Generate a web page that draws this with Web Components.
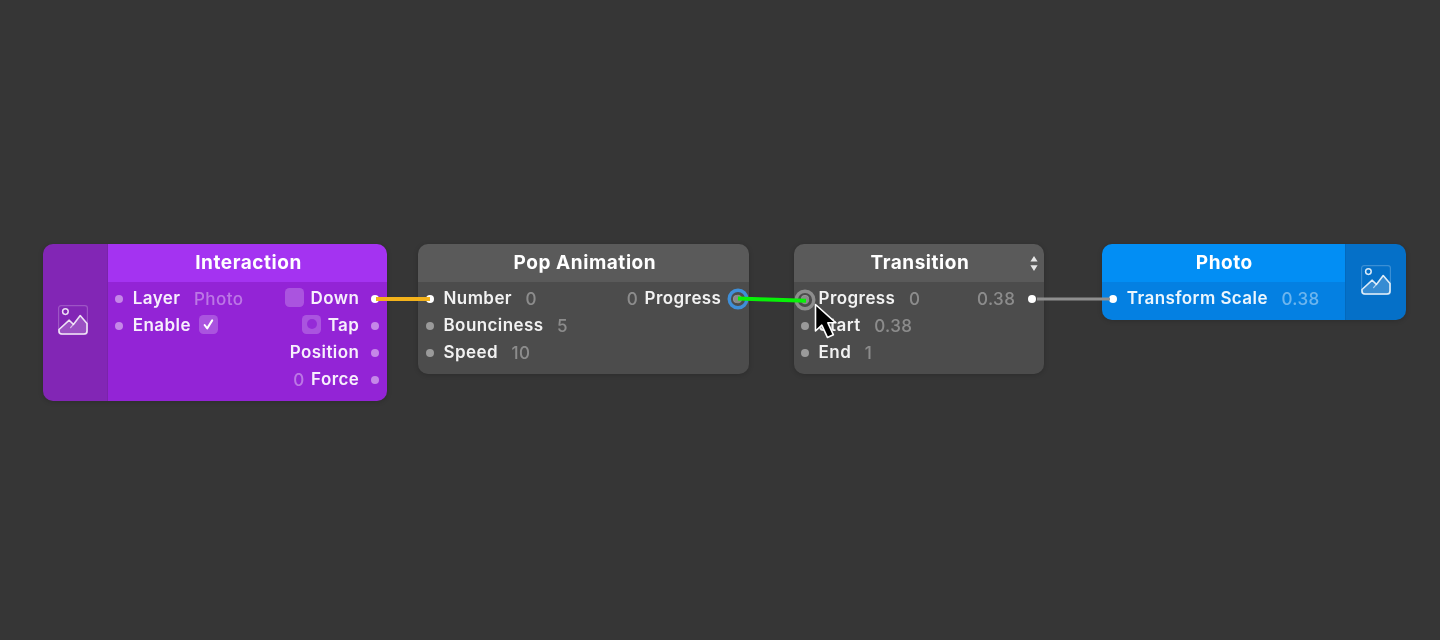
<!DOCTYPE html>
<html lang="en"><head><meta charset="utf-8"><title>Patch editor</title>
<style>html,body{margin:0;background:#363636}</style></head>
<body>
<patch-canvas>
  <patch-node title="Interaction" theme="purple" side="left" style="left:42.7px;top:243.7px;width:344.6px">
    <patch-row>
      <patch-port slot="left" dir="in" label="Layer" value="Photo"></patch-port>
      <patch-port slot="right" dir="out" label="Down" state="on"><toggle-box kind="plain"></toggle-box></patch-port>
    </patch-row>
    <patch-row>
      <patch-port slot="left" dir="in" label="Enable"><toggle-box kind="check"></toggle-box></patch-port>
      <patch-port slot="right" dir="out" label="Tap"><toggle-box kind="dot"></toggle-box></patch-port>
    </patch-row>
    <patch-row><patch-port slot="right" dir="out" label="Position"></patch-port></patch-row>
    <patch-row><patch-port slot="right" dir="out" label="Force" value="0"></patch-port></patch-row>
  </patch-node>
  <patch-node title="Pop Animation" theme="gray" style="left:418.4px;top:243.7px;width:331px">
    <patch-row>
      <patch-port slot="left" dir="in" label="Number" value="0" state="on"></patch-port>
      <patch-port slot="right" dir="out" label="Progress" value="0"></patch-port>
    </patch-row>
    <patch-row><patch-port slot="left" dir="in" label="Bounciness" value="5"></patch-port></patch-row>
    <patch-row><patch-port slot="left" dir="in" label="Speed" value="10"></patch-port></patch-row>
  </patch-node>
  <patch-node title="Transition" theme="gray" sort style="left:793.5px;top:243.7px;width:250.8px">
    <patch-row>
      <patch-port slot="left" dir="in" label="Progress" value="0"></patch-port>
      <patch-port slot="right" dir="out" value="0.38" state="on"></patch-port>
    </patch-row>
    <patch-row><patch-port slot="left" dir="in" label="Start" value="0.38"></patch-port></patch-row>
    <patch-row><patch-port slot="left" dir="in" label="End" value="1"></patch-port></patch-row>
  </patch-node>
  <patch-node title="Photo" theme="blue" side="right" style="left:1101.7px;top:243.7px;width:304.3px">
    <patch-row><patch-port slot="left" dir="in" label="Transform Scale" value="0.38" state="on"></patch-port></patch-row>
  </patch-node>
  <patch-wires></patch-wires>
</patch-canvas>
<script>
function define(name, css, html){
  customElements.define(name, class extends HTMLElement{
    connectedCallback(){
      if(this.shadowRoot) return;
      const r=this.attachShadow({mode:'open'});
      r.innerHTML='<style>'+css+'</style>'+(typeof html==='function'?html(this):html);
    }
  });
}
const attr=(el,n)=>el.getAttribute(n)||'';
const picture=`<svg viewBox="0 0 30 30" width="30" height="30" fill="none" stroke-linejoin="round" stroke-linecap="round">
<rect x=".6" y=".6" width="28.8" height="28.8" rx="2.5" stroke="#fff" stroke-opacity=".22" stroke-width="1.2"/>
<circle cx="7.4" cy="6.6" r="2.8" stroke="#fff" stroke-opacity=".85" stroke-width="1.5"/>
<path d="M1 24.5 11.2 15.2 15.4 19.4 22.2 10.6 29 18.6V26a3 3 0 0 1-3 3H4a3 3 0 0 1-3-3Z" fill="#fff" fill-opacity=".2" stroke="#fff" stroke-opacity=".85" stroke-width="1.6"/>
<path d="M15.4 19.4 12.6 22.6" stroke="#fff" stroke-opacity=".6" stroke-width="1.3"/></svg>`;

define('patch-canvas',
 `:host{display:block;position:relative;width:1440px;height:640px;overflow:hidden;background:#363636;
   font-family:Inter,"Noto Sans",sans-serif;color:#fff;filter:blur(.45px)}`,
 '<slot></slot>');

define('patch-node',
 `:host{position:absolute;display:flex;border-radius:10px;overflow:hidden;box-shadow:0 1px 5px rgba(0,0,0,.18);
   --head:#5a5a5a;--body:#4c4c4c;--side:#4c4c4c;--dot:#9a9a9a;--val:rgba(255,255,255,.36)}
 :host([theme=purple]){--head:#a433f1;--body:#9324d6;--side:#8226b5;--dot:#c587e8;--val:rgba(255,255,255,.38)}
 :host([theme=blue]){--head:#028ef4;--body:#0480e2;--side:#0570c8;--dot:#fff;--val:rgba(255,255,255,.42)}
 .main{flex:1;min-width:0;display:flex;flex-direction:column}
 header{height:38px;flex:none;background:var(--head);display:flex;align-items:center;justify-content:center;
   position:relative;font-size:19px;font-weight:700;letter-spacing:.55px;padding:0 0 1px 2px;box-sizing:border-box}
 .rows{flex:1;background:var(--body);padding:3.6px 8px 7.4px 7.6px}
 aside{flex:none;display:flex;align-items:center;justify-content:center;background:var(--side);box-sizing:border-box;padding-bottom:4px}
 aside.left{width:65px;border-right:1px solid rgba(0,0,0,.06);padding-right:4px}
 aside.right{width:61px;border-left:1px solid rgba(0,0,0,.06)}
 .sort{position:absolute;right:6.5px;top:12px;display:block}`,
 el=>{
  const s=attr(el,'side');
  const a=s?`<aside class="${s}">${picture}</aside>`:'';
  const sort=el.hasAttribute('sort')?`<svg class="sort" width="8" height="15" viewBox="0 0 8 15"><path d="M4 0 7.6 5.4H.4ZM4 15 .4 9.2H7.6Z" fill="#e6e6e6"/></svg>`:'';
  const m=`<div class="main"><header>${attr(el,'title')}${sort}</header><div class="rows"><slot></slot></div></div>`;
  return s==='left'?a+m:m+a;
 });

define('patch-row',
 `:host{display:flex;justify-content:space-between;align-items:center;height:27px}
  .l,.r{display:flex}`,
 '<div class="l"><slot name="left"></slot></div><div class="r"><slot name="right"></slot></div>');

define('patch-port',
 `:host{display:flex;align-items:center;height:27px;font-size:17px;font-weight:600;letter-spacing:.42px;white-space:nowrap;color:rgba(255,255,255,.93)}
 .dot{width:8px;height:8px;border-radius:50%;background:var(--dot);flex:none}
 :host([state=on]) .dot{background:#fff}
 .lab{margin-bottom:2px}
 .v{color:var(--val);font-weight:500}
 :host([dir=in]) .dot{margin-right:9.5px}
 :host([dir=in]) .v{margin-left:13.5px}
 :host([dir=out]) .dot{margin-left:12px}
 :host([dir=out]) .v{margin-right:6.5px}
 :host([dir=out]:not([label])) .v{margin-right:1px}`,
 el=>{
  const lab=attr(el,'label')?`<span class="lab">${attr(el,'label')}</span>`:'';
  const val=attr(el,'value')?`<span class="v">${attr(el,'value')}</span>`:'';
  return attr(el,'dir')==='in'
   ? `<span class="dot"></span>${lab}${val}<slot></slot>`
   : `${val}<slot></slot>${lab}<span class="dot"></span>`;
 });

define('toggle-box',
 `:host{display:flex;align-items:center;justify-content:center;width:19px;height:19px;border-radius:4.5px;background:rgba(255,255,255,.22);flex:none;margin-bottom:3.5px}
  :host-context(patch-port[dir=in]){margin-left:8.5px}
  :host-context(patch-port[dir=out]){margin-right:6.5px}
  i{display:block;width:10px;height:10px;border-radius:50%;background:rgba(146,36,214,.85)}`,
 el=>{
  const k=attr(el,'kind');
  if(k==='check') return '<svg width="11" height="11" viewBox="0 0 11 11" fill="none"><path d="M1.6 6 4.2 9.4 9.2 1.4" stroke="#fff" stroke-width="2" stroke-linecap="round" stroke-linejoin="round"/></svg>';
  if(k==='dot') return '<i></i>';
  return '';
 });

define('patch-wires',
 `:host{position:absolute;inset:0;display:block;pointer-events:none}svg{position:absolute;left:0;top:0}`,
 `<svg width="1440" height="640" viewBox="0 0 1440 640" fill="none">
  <circle cx="738" cy="299" r="8.8" stroke="#3f8fd8" stroke-width="3.4"/>
  <circle cx="738" cy="299" r="4.2" fill="#8a8a8a"/>
  <circle cx="805" cy="300" r="8.8" stroke="#8d8d8d" stroke-width="3.4"/>
  <circle cx="805" cy="300" r="4.2" fill="#8a8a8a"/>
  <path d="M376 299H430" stroke="#f3b21b" stroke-width="3.8"/>
  <path d="M738 298.6 806 300.8" stroke="#08f008" stroke-width="4"/>
  <path d="M1037 299H1110" stroke="#8f8f8f" stroke-width="3.2"/>
  <path d="M815.5 304.5V331l6.3-5.8 5.6 12.2 6-2.6-5.5-12h8Z" fill="#000" stroke="#fff" stroke-width="1.6" stroke-linejoin="round"/>
 </svg>`);
</script>
</body></html>
